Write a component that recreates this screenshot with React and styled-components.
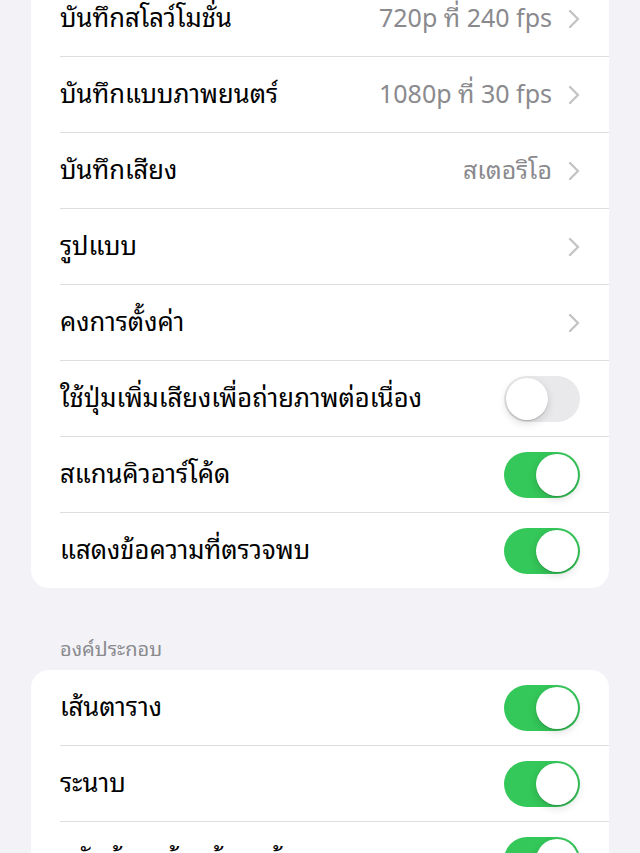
import React from "react";
import styled, { createGlobalStyle } from "styled-components";

const GlobalStyle = createGlobalStyle`
  html, body {
    margin: 0;
    padding: 0;
    background: #f2f2f7;
  }
  body {
    font-family: "Noto Sans Thai Looped", "Noto Sans Thai", "Noto Sans", "Liberation Sans", sans-serif;
    -webkit-font-smoothing: antialiased;
  }
`;

const Page = styled.div`
  width: 640px;
  height: 853px;
  overflow: hidden;
  background: #f2f2f7;
`;

const List = styled.div`
  margin-top: -19px;
`;

const Card = styled.div`
  margin: 0 31px;
  background: #ffffff;
  border-radius: 18px;
  overflow: hidden;
`;

const Row = styled.div`
  padding-left: 29px;
`;

const RowInner = styled.div`
  display: flex;
  align-items: center;
  height: 75px;
  padding-right: 29px;
  border-bottom: ${(p) => (p.$last ? "none" : "1px solid #dedee2")};
`;

const Label = styled.span`
  flex: 1;
  font-size: 25.6px;
  line-height: 34px;
  padding-bottom: 5px;
  color: #000;
  white-space: nowrap;
`;

const Value = styled.span`
  font-size: 25px;
  line-height: 34px;
  padding-bottom: 5px;
  color: #8a8a8e;
  margin-right: 16px;
  white-space: nowrap;
`;

const Chevron = styled.svg`
  width: 12px;
  height: 20px;
  flex: none;
`;

const SectionHeader = styled.div`
  padding: 47px 60px 11px;
  font-size: 20px;
  line-height: 24px;
  color: #8a8a8e;
`;

const Track = styled.div`
  width: 76px;
  height: 46px;
  border-radius: 23px;
  background: ${(p) => (p.$on ? "#34c759" : "#e9e9eb")};
  display: flex;
  align-items: center;
  justify-content: ${(p) => (p.$on ? "flex-end" : "flex-start")};
  padding: 0 2px;
  box-sizing: border-box;
  flex: none;
`;

const Knob = styled.div`
  width: 42px;
  height: 42px;
  border-radius: 50%;
  background: #fff;
  box-shadow: 0 3px 8px rgba(0, 0, 0, 0.15), 0 1px 1px rgba(0, 0, 0, 0.16);
`;

const Toggle = ({ on }) => (
  <Track $on={on}>
    <Knob />
  </Track>
);

const ChevronIcon = () => (
  <Chevron viewBox="0 0 12 20">
    <path d="M2 2l8 8-8 8" fill="none" stroke="#c4c4c7" strokeWidth="2.4" strokeLinecap="round" strokeLinejoin="round" />
  </Chevron>
);

const general = [
  { label: "บันทึกสโลว์โมชั่น", value: "720p ที่ 240 fps", nav: true },
  { label: "บันทึกแบบภาพยนตร์", value: "1080p ที่ 30 fps", nav: true },
  { label: "บันทึกเสียง", value: "สเตอริโอ", nav: true },
  { label: "รูปแบบ", nav: true },
  { label: "คงการตั้งค่า", nav: true },
  { label: "ใช้ปุ่มเพิ่มเสียงเพื่อถ่ายภาพต่อเนื่อง", toggle: false },
  { label: "สแกนคิวอาร์โค้ด", toggle: true },
  { label: "แสดงข้อความที่ตรวจพบ", toggle: true },
];

const composition = [
  { label: "เส้นตาราง", toggle: true },
  { label: "ระนาบ", toggle: true },
  { label: "กลับด้านกล้องด้านหน้า", toggle: true },
];

const SettingRow = ({ item, last }) => (
  <Row>
    <RowInner $last={last}>
      <Label>{item.label}</Label>
      {item.value && <Value>{item.value}</Value>}
      {item.nav && <ChevronIcon />}
      {item.toggle !== undefined && <Toggle on={item.toggle} />}
    </RowInner>
  </Row>
);

export default function App() {
  return (
    <Page>
      <GlobalStyle />
      <List>
        <Card>
          {general.map((item, i) => (
            <SettingRow key={item.label} item={item} last={i === general.length - 1} />
          ))}
        </Card>
        <SectionHeader>องค์ประกอบ</SectionHeader>
        <Card>
          {composition.map((item, i) => (
            <SettingRow key={item.label} item={item} last={i === composition.length - 1} />
          ))}
        </Card>
      </List>
    </Page>
  );
}
